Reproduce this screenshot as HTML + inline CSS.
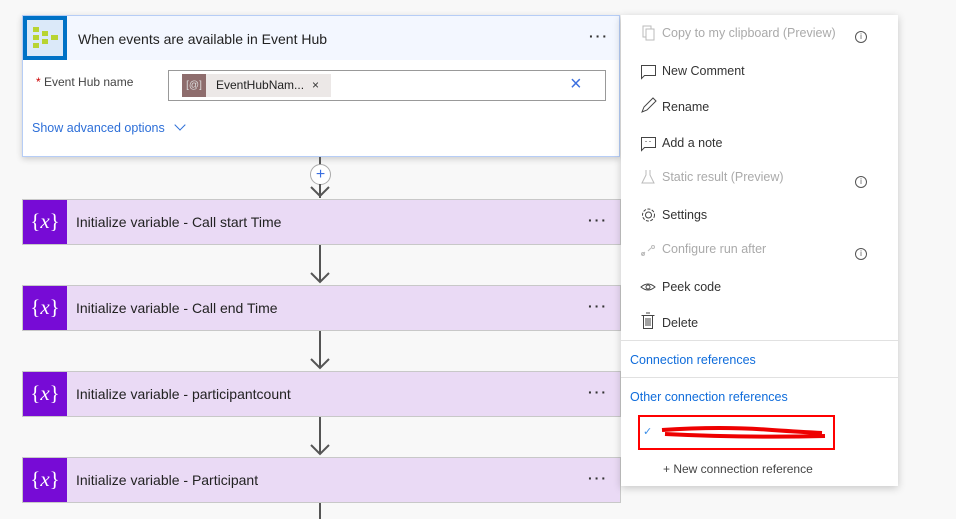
<!DOCTYPE html><html><head><style>
body{margin:0;width:956px;height:518px;background:#f8f8f8;font-family:"Liberation Sans",sans-serif;position:relative;overflow:hidden}
.abs{position:absolute}
.trig{left:22px;top:15px;width:596px;height:140px;background:#fff;border:1px solid #b6cdf6;box-shadow:0 2px 6px rgba(0,0,0,.18)}
.th{position:absolute;left:0;top:0;right:0;height:44px;background:#f3f7ff}
.var{position:absolute;left:22px;width:599px;height:46px;background:#eadaf5;border:1px solid #c8c8c8;box-sizing:border-box}
.vi{position:absolute;left:0;top:0;width:44px;height:44px;background:#770bd6;color:#fff;font-family:"Liberation Serif",serif;font-size:21px;text-align:center;line-height:42px}
.vt{position:absolute;left:53px;top:0;line-height:45px;font-size:14px;color:#222}
.dots{position:absolute;right:12px;top:12px;font-size:14px;letter-spacing:2px;color:#333;font-weight:bold}
.line{position:absolute;left:319px;width:2px;background:#555}
.menu{left:621px;top:15px;width:277px;height:471px;background:#fff;box-shadow:0 2px 8px rgba(0,0,0,.2)}
.mi{position:absolute;left:41px;font-size:12.5px;color:#333}
.dis{color:#aaa}
.info{position:absolute;left:234px;width:10px;height:10px;border:1px solid #555;border-radius:50%;font-size:8px;text-align:center;line-height:10px;color:#555}
.blue{color:#0f6cdb;font-size:12.5px;position:absolute;left:9px}
</style></head><body>
<div class="abs trig">
 <div class="th"></div>
 <div class="abs" style="left:0;top:0;width:44px;height:44px;background:#0072c6">
  <div class="abs" style="left:4px;top:4px;width:36px;height:36px;background:#dbe9f9"></div>
  <div class="abs" style="left:10px;top:11px;width:6px;height:5px;background:#b8d432"></div>
  <div class="abs" style="left:10px;top:19px;width:6px;height:5px;background:#b8d432"></div>
  <div class="abs" style="left:10px;top:27px;width:6px;height:5px;background:#b8d432"></div>
  <div class="abs" style="left:19px;top:15px;width:6px;height:5px;background:#b8d432"></div>
  <div class="abs" style="left:19px;top:23px;width:6px;height:5px;background:#b8d432"></div>
  <div class="abs" style="left:28px;top:19px;width:7px;height:5px;background:#b8d432"></div>
 </div>
 <div class="abs" style="left:55px;top:15px;font-size:14px;color:#222">When events are available in Event Hub</div>
 <div class="dots" style="right:10px;top:12px">···</div>
 <div class="abs" style="left:13px;top:59px;font-size:12px;color:#444"><span style="color:#c00">*</span> Event Hub name</div>
 <div class="abs" style="left:145px;top:54px;width:436px;height:29px;border:1px solid #999">
  <div class="abs" style="left:13px;top:3px;width:149px;height:23px;background:#ece8e7"></div>
  <div class="abs" style="left:13px;top:3px;width:24px;height:23px;background:#8e6d6d;color:#ddd;font-size:10px;text-align:center;line-height:23px">[@]</div>
  <div class="abs" style="left:47px;top:7px;font-size:12px;color:#222">EventHubNam...</div>
  <div class="abs" style="left:143px;top:7px;font-size:12px;color:#333">×</div>
  <div class="abs" style="left:401px;top:2px;font-size:20px;color:#3b6fe0">×</div>
 </div>
 <div class="abs" style="left:9px;top:105px;font-size:12.5px;color:#2d6fd8">Show advanced options <span style="display:inline-block;width:7px;height:7px;border-right:1px solid #2d6fd8;border-bottom:1px solid #2d6fd8;transform:rotate(45deg);margin-left:8px;position:relative;top:-3px"></span></div>
</div>
<div class="line" style="top:157px;height:12px"></div>
<div class="abs" style="left:310px;top:164px;width:19px;height:19px;border:1px solid #aaa;border-radius:50%;background:#fff;color:#3b6fe0;text-align:center;line-height:19px;font-size:16px">+</div>
<div class="line" style="top:184px;height:14px"></div>
<div class="line" style="top:245px;height:37px"></div>
<div class="line" style="top:331px;height:37px"></div>
<div class="line" style="top:417px;height:37px"></div>
<div class="line" style="top:503px;height:16px"></div>
<svg class="abs" style="left:0;top:0" width="956" height="518"><g stroke="#555" stroke-width="2" fill="none"><path d="M311 187l9 9 9-9M311 273l9 9 9-9M311 359l9 9 9-9M311 445l9 9 9-9"/></g></svg>
<div class="var" style="top:199px"><div class="vi">{<i>x</i>}</div><div class="vt">Initialize variable - Call start Time</div><div class="dots">···</div></div>
<div class="var" style="top:285px"><div class="vi">{<i>x</i>}</div><div class="vt">Initialize variable - Call end Time</div><div class="dots">···</div></div>
<div class="var" style="top:371px"><div class="vi">{<i>x</i>}</div><div class="vt">Initialize variable - participantcount</div><div class="dots">···</div></div>
<div class="var" style="top:457px"><div class="vi">{<i>x</i>}</div><div class="vt">Initialize variable - Participant</div><div class="dots">···</div></div>
<div class="abs menu">
 <svg class="abs" style="left:0;top:0" width="40" height="320" fill="none" stroke="#444" stroke-width="1">
  <rect x="22" y="11" width="8" height="11" stroke="#bbb"/><rect x="25" y="14" width="8" height="11" stroke="#bbb" fill="#fff"/>
  <path d="M20.5 50.5h14v10h-11l-3 3z"/>
  <path d="M21 97l2-5 9-9 3 3-9 9z"/>
  <path d="M20.5 122.5h14v10h-11l-3 3z"/><path d="M25 126v1M29 126v1"/>
  <path d="M25 155v5l-4 8h12l-4-8v-5" stroke="#bbb"/>
  <circle cx="27.5" cy="200" r="3"/><circle cx="27.5" cy="200" r="6" stroke-dasharray="3 1.5"/>
  <path d="M21 240l3-3M27 236l3-3" stroke="#bbb"/><circle cx="22" cy="239" r="1.5" stroke="#bbb"/><circle cx="32" cy="232" r="1.5" stroke="#bbb"/>
  <path d="M20 272q7-6 14 0q-7 6-14 0z"/><circle cx="27" cy="272" r="2"/>
  <path d="M20.5 300.5h13M22.5 300.5v13h9v-13M25 303v8M27 303v8M29 303v8M25 298h4"/>
 </svg>
 <div class="mi dis" style="top:11px">Copy to my clipboard (Preview)</div><div class="info" style="top:16px">i</div>
 <div class="mi" style="top:49px">New Comment</div>
 <div class="mi" style="top:85px">Rename</div>
 <div class="mi" style="top:121px">Add a note</div>
 <div class="mi dis" style="top:155px">Static result (Preview)</div><div class="info" style="top:161px">i</div>
 <div class="mi" style="top:193px">Settings</div>
 <div class="mi dis" style="top:227px">Configure run after</div><div class="info" style="top:233px">i</div>
 <div class="mi" style="top:265px">Peek code</div>
 <div class="mi" style="top:301px">Delete</div>
 <div class="abs" style="left:0;right:0;top:325px;height:1px;background:#e1e1e1"></div>
 <div class="blue" style="top:338px">Connection references</div>
 <div class="abs" style="left:0;right:0;top:362px;height:1px;background:#e1e1e1"></div>
 <div class="blue" style="top:375px">Other connection references</div>
 <div class="abs" style="left:17px;top:400px;width:197px;height:35px;border:2px solid #f00;box-sizing:border-box"></div>
 <div class="abs" style="left:22px;top:410px;color:#3b8ee8;font-size:11px">✓</div>
 <svg class="abs" style="left:36px;top:410px" width="170" height="16"><path d="M5 5q60-4 110 0 30 2 50 3M8 9q80 4 160 2" stroke="#e00" stroke-width="4" fill="none"/></svg>
 <div class="abs" style="left:42px;top:447px;font-size:12px;color:#444">+ New connection reference</div>
</div>
</body></html>
